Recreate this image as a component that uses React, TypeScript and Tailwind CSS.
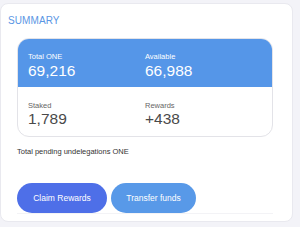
export default function App() {
  return (
    <div
      className="w-[300px] h-[227px] bg-[#f3f3f8] pt-[3px] overflow-hidden"
      style={{ fontFamily: '"Liberation Sans", Arial, sans-serif' }}
    >
      <div className="w-[293px] h-[219px] bg-white rounded-[8px] border border-[#e9e9ef] flex flex-col">
        <div className="pl-[7px] pt-[11px] text-[10px] leading-[12px] text-[#5b96e4] tracking-[0.1px]">
          SUMMARY
        </div>

        <div className="ml-[16px] mt-[11px] w-[256px] rounded-[12px] border border-[#e3e3e8] overflow-hidden">
          <div className="bg-[#5596e8] grid grid-cols-2 px-[10px] pt-[13px] pb-[8px] text-white">
            <div>
              <div className="text-[7.5px] leading-[10px]">Total ONE</div>
              <div className="text-[15.5px] leading-[17px]">69,216</div>
            </div>
            <div>
              <div className="text-[7.5px] leading-[10px]">Available</div>
              <div className="text-[15.5px] leading-[17px]">66,988</div>
            </div>
          </div>
          <div className="grid grid-cols-2 px-[10px] pt-[14px] pb-[9px]">
            <div>
              <div className="text-[7.5px] leading-[10px] text-[#666]">Staked</div>
              <div className="text-[15.5px] leading-[16px] text-[#4a4a4a]">1,789</div>
            </div>
            <div>
              <div className="text-[7.5px] leading-[10px] text-[#666]">Rewards</div>
              <div className="text-[15.5px] leading-[16px] text-[#4a4a4a]">+438</div>
            </div>
          </div>
        </div>

        <div className="ml-[16px] mt-[10px] text-[7.5px] leading-[10px] text-[#333]">
          Total pending undelegations ONE
        </div>

        <div className="ml-[16px] mt-[26px] w-[256px] flex gap-[4px] border-b border-[#f3f3f6]">
          <button className="w-[90px] h-[30px] rounded-full bg-[#4e6fe8] text-white text-[8.5px]">
            Claim Rewards
          </button>
          <button className="w-[85px] h-[30px] rounded-full bg-[#5899e8] text-white text-[8.5px]">
            Transfer funds
          </button>
        </div>
      </div>
    </div>
  );
}
